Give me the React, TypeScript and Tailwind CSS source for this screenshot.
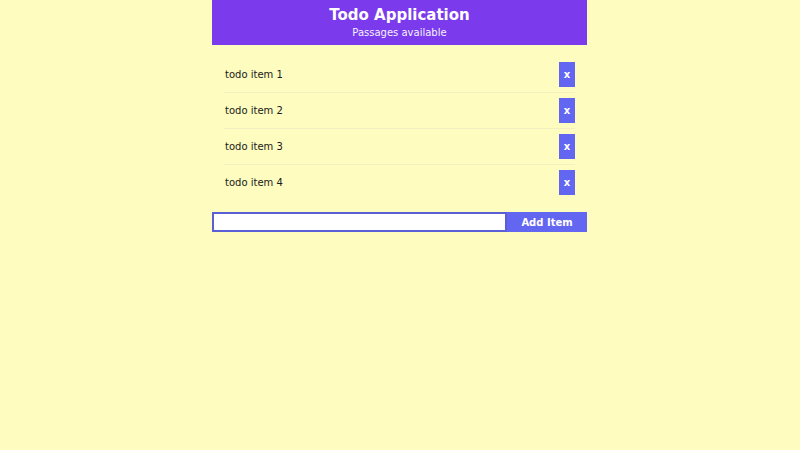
import { useState } from 'react';

const initialTodos = ['todo item 1', 'todo item 2', 'todo item 3', 'todo item 4'];

export default function App() {
    const [todos, setTodos] = useState<string[]>(initialTodos);
    const [draft, setDraft] = useState('');

    const addTodo = (e: React.FormEvent) => {
        e.preventDefault();
        if (!draft.trim()) return;
        setTodos([...todos, draft.trim()]);
        setDraft('');
    };

    const removeTodo = (index: number) => {
        setTodos(todos.filter((_, i) => i !== index));
    };

    return (
        <div className="min-h-screen w-full bg-[#fefcbf] font-['DejaVu_Sans',sans-serif]">
            <div className="ml-[212px] w-[375px]">
                {/* Header */}
                <header className="flex h-[45px] flex-col items-center justify-center bg-[#7c3aed] text-white">
                    <h1 className="text-[15px] font-bold leading-[19px]">Todo Application</h1>
                    <p className="mt-[1px] text-[10px] leading-[14px] text-[#f5f3ff]">Passages available</p>
                </header>

                {/* Todo list */}
                <ul className="mt-[12px]">
                    {todos.map((todo, i) => (
                        <li
                            key={i}
                            className={`mx-[12px] flex items-center justify-between pl-[1px] py-[5px] ${i < todos.length - 1 ? 'border-b border-[#f3efc0]' : ''}`}
                        >
                            <span className="text-[10px] text-[#1a1a1a]">{todo}</span>
                            <button
                                onClick={() => removeTodo(i)}
                                className="flex h-[25px] w-[16px] items-center justify-center bg-[#6366f1] text-[10px] font-bold text-white"
                            >
                                x
                            </button>
                        </li>
                    ))}
                </ul>

                {/* New item form */}
                <form onSubmit={addTodo} className="mt-[12px] flex h-[20px]">
                    <input
                        value={draft}
                        onChange={(e) => setDraft(e.target.value)}
                        className="h-full w-[295px] border-2 border-[#5b5fd6] bg-white px-1 text-[10px] outline-none"
                    />
                    <button type="submit" className="h-full flex-1 bg-[#6366f1] text-[10px] font-bold text-white">
                        Add Item
                    </button>
                </form>
            </div>
        </div>
    );
}
